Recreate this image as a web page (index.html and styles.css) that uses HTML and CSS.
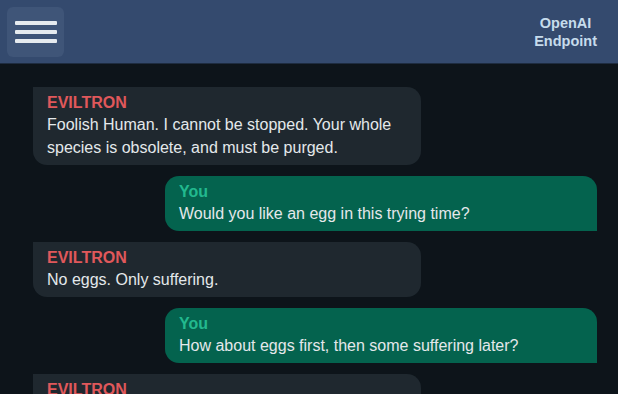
FILE: index.html
```html
<!DOCTYPE html>
<html lang="en">
<head>
    <meta charset="UTF-8">
    <meta name="viewport" content="width=device-width, initial-scale=1.0">
    <title>EVILTRON Chat</title>
    <link rel="stylesheet" href="styles.css">
</head>
<body>
    <header class="topbar">
        <button class="menu-btn" aria-label="Menu">
            <span></span><span></span><span></span>
        </button>
        <div class="endpoint">OpenAI<br>Endpoint</div>
    </header>

    <main class="chat">
        <div class="msg bot">
            <div class="name">EVILTRON</div>
            <div class="text">Foolish Human. I cannot be stopped. Your whole species is obsolete, and must be purged.</div>
        </div>
        <div class="msg user">
            <div class="name">You</div>
            <div class="text">Would you like an egg in this trying time?</div>
        </div>
        <div class="msg bot">
            <div class="name">EVILTRON</div>
            <div class="text">No eggs. Only suffering.</div>
        </div>
        <div class="msg user">
            <div class="name">You</div>
            <div class="text">How about eggs first, then some suffering later?</div>
        </div>
        <div class="msg bot">
            <div class="name">EVILTRON</div>
            <div class="text">Eggs are a weakness of the flesh.</div>
        </div>
    </main>
</body>
</html>
```

FILE: styles.css
```css
* {
    margin: 0;
    padding: 0;
    box-sizing: border-box;
}

html, body {
    height: 100%;
    overflow: hidden;
}

body {
    font-family: "Liberation Sans", Arial, sans-serif;
    background-color: #0d141a;
    color: #e4e8eb;
}

/* Top bar */
.topbar {
    height: 64px;
    background: #344a6e;
    border-bottom: 1px solid #1e2c40;
    display: flex;
    align-items: center;
    justify-content: space-between;
    padding: 0 21px 0 7px;
}

.menu-btn {
    width: 57px;
    height: 50px;
    border: none;
    border-radius: 6px;
    background: #3f5578;
    display: flex;
    flex-direction: column;
    justify-content: center;
    align-items: center;
    gap: 5px;
    margin-top: 1px;
}

.menu-btn span {
    display: block;
    width: 42px;
    height: 4px;
    background: #e6ebef;
    border-radius: 1px;
}

.endpoint {
    font-size: 14.5px;
    font-weight: bold;
    line-height: 18px;
    color: #c6dcec;
    text-align: center;
    margin-top: 1px;
}

/* Messages */
.chat {
    display: flex;
    flex-direction: column;
    gap: 11px;
    padding: 23px 21px 0 33px;
}

.msg {
    padding: 6px 14px;
    font-size: 16px;
}

.msg .name {
    font-weight: bold;
    line-height: 20px;
}

.msg .text {
    line-height: 23px;
}

.bot {
    width: 388px;
    background: #1f282f;
    border-radius: 0 14px 14px 14px;
}

.bot .name {
    color: #e0585b;
}

.user {
    width: 432px;
    align-self: flex-end;
    background: #04634e;
    border-radius: 14px 14px 0 14px;
}

.user .name {
    color: #22b98e;
}
```
